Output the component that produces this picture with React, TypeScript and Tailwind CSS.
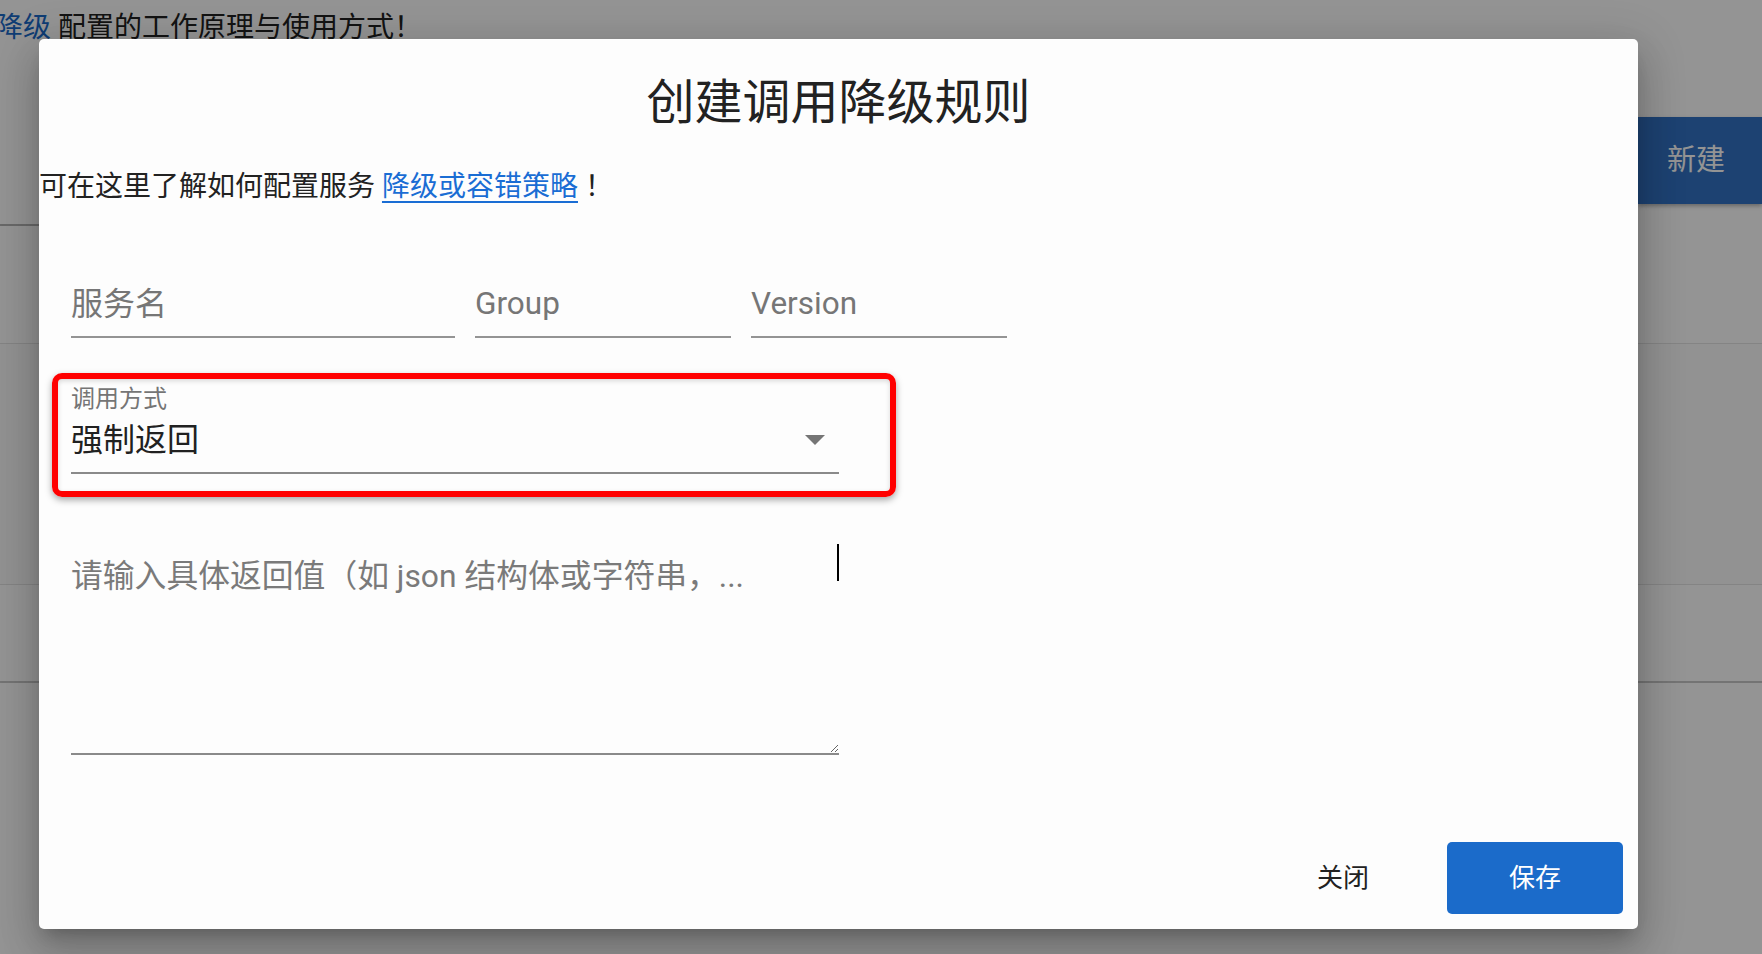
import React from "react";

export default function App() {
  return (
    <div className="relative h-[954px] w-[1762px] overflow-hidden bg-white font-['Roboto','Noto_Sans_CJK_SC',sans-serif] text-[#212121]">
      {/* underlying page */}
      <div className="flex flex-col">
        <div className="ml-[-5px] mt-[8px] h-[40px] whitespace-nowrap text-[28px] leading-[40px] text-[#222]">
          <span className="text-[#1b6ac9]">降级</span> 配置的工作原理与使用方式！
        </div>
        <div className="mt-[69px] flex justify-end">
          <div className="flex h-[87px] w-[124px] items-center bg-[#3373c4] pl-[29px] text-[29px] text-white shadow-[0_2px_4px_rgba(0,0,0,0.3)]">
            新建
          </div>
        </div>
        <div className="h-[22px] w-[700px] border-b-2 border-[#b5b5b5]" />
        <div className="h-[118px] border-b border-[#e3e3e3]" />
        <div className="h-[241px] border-b border-[#e3e3e3] bg-[#fcfcfc]" />
        <div className="h-[98px] border-b-2 border-[#c8c8c8]" />
      </div>

      {/* overlay */}
      <div className="absolute inset-0 bg-black/[0.42]" />

      {/* dialog */}
      <div className="absolute left-[39px] top-[39px] flex h-[890px] w-[1599px] flex-col rounded-[5px] bg-[#fdfdfd] shadow-[0_11px_15px_-7px_rgba(0,0,0,0.2),0_24px_38px_3px_rgba(0,0,0,0.14),0_9px_46px_8px_rgba(0,0,0,0.12)]">
        <h2 className="pt-[26px] text-center text-[48px] font-normal leading-[76px] text-[#222]">
          创建调用降级规则
        </h2>
        <p className="mt-[26px] whitespace-nowrap pl-0 text-[28px] leading-[40px] text-[#222]">
          可在这里了解如何配置服务{" "}
          <a className="text-[#1a6dd4] underline underline-offset-[5px]">降级或容错策略</a> ！
        </p>

        {/* service fields */}
        <div className="ml-[32px] mt-[77px] flex gap-[20px]">
          <div className="w-[384px] border-b-2 border-[#949494] pb-[12px] text-[32px] leading-[40px] text-[#767676]">
            服务名
          </div>
          <div className="w-[256px] border-b-2 border-[#949494] pb-[12px] text-[31.5px] leading-[40px] text-[#767676]">
            Group
          </div>
          <div className="w-[256px] border-b-2 border-[#949494] pb-[12px] text-[31.5px] leading-[40px] text-[#767676]">
            Version
          </div>
        </div>

        {/* select */}
        <div className="relative ml-[32px] mt-[46px] w-[768px]">
          <div className="text-[24px] leading-[30px] text-[#757575]">调用方式</div>
          <div className="mt-[6px] flex items-center justify-between border-b-2 border-[#8a8a8a] pb-[12px] pr-[14px]">
            <span className="text-[32px] leading-[40px] text-[#212121]">强制返回</span>
            <svg width="20" height="10" viewBox="0 0 20 10">
              <polygon points="0,0 20,0 10,10" fill="#757575" />
            </svg>
          </div>
          <div className="pointer-events-none absolute bottom-[-23px] left-[-19px] right-[-57px] top-[-11px] rounded-[10px] border-[6px] border-[#ff0000] shadow-[0_3px_7px_rgba(0,0,0,0.35),inset_0_2px_5px_rgba(0,0,0,0.15)]" />
        </div>

        {/* textarea */}
        <div className="relative ml-[32px] mt-[82px] w-[768px]">
          <textarea
            className="block h-[199px] w-full resize-y border-b-2 border-[#8a8a8a] bg-transparent p-0 text-[31.8px] leading-[40px] text-[#212121] outline-none placeholder:text-[#7a7a7a]"
            placeholder="请输入具体返回值（如 json 结构体或字符串，..."
          />
          <span className="pointer-events-none absolute left-[766px] top-[-12px] h-[37px] w-[2px] bg-black" />
        </div>

        {/* actions */}
        <div className="mt-auto flex items-center justify-end gap-[40px] pb-[15px] pr-[15px]">
          <button className="h-[72px] w-[128px] text-[26px] text-[#212121]">关闭</button>
          <button className="h-[72px] w-[176px] rounded-[5px] bg-[#1b6bca] text-[26px] text-white">
            保存
          </button>
        </div>
      </div>
    </div>
  );
}
